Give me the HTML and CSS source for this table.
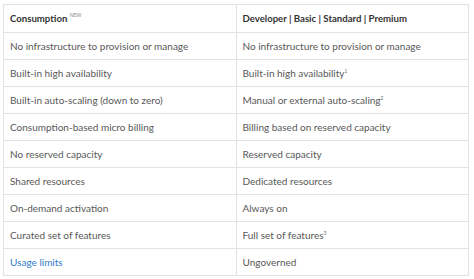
FILE: index.html
```html
<!DOCTYPE html>
<html>
<head>
<meta charset="utf-8">
<link rel="stylesheet" href="styles.css">
</head>
<body>
<table class="cmp">
  <thead>
    <tr><th>Consumption <sup class="new">NEW</sup></th><th>Developer | Basic | Standard | Premium</th></tr>
  </thead>
  <tbody>
    <tr><td>No infrastructure to provision or manage</td><td>No infrastructure to provision or manage</td></tr>
    <tr><td>Built-in high availability</td><td>Built-in high availability<sup class="fn">1</sup></td></tr>
    <tr><td>Built-in auto-scaling (down to zero)</td><td>Manual or external auto-scaling<sup class="fn">2</sup></td></tr>
    <tr><td>Consumption-based micro billing</td><td>Billing based on reserved capacity</td></tr>
    <tr><td>No reserved capacity</td><td>Reserved capacity</td></tr>
    <tr><td>Shared resources</td><td>Dedicated resources</td></tr>
    <tr><td>On-demand activation</td><td>Always on</td></tr>
    <tr><td>Curated set of features</td><td>Full set of features<sup class="fn">3</sup></td></tr>
    <tr><td><a class="link" href="#">Usage limits</a></td><td>Ungoverned</td></tr>
  </tbody>
</table>
</body>
</html>
```
FILE: styles.css
```css
html, body { margin: 0; padding: 0; background: #fff; }
body { padding: 4px 5px 0 3px; }
.cmp {
  width: 466px;
  border-collapse: collapse;
  table-layout: fixed;
  font-family: Lato, "Open Sans", sans-serif;
  font-size: 10px;
  color: #585858;
  border: 1px solid #cfcfcf;
}
.cmp th, .cmp td {
  text-align: left;
  padding: 0 0 0 6px;
  border: 1px solid #e3e3e3;
  white-space: nowrap;
}
.cmp th {
  height: 27px;
  font-weight: bold;
  font-size: 9.6px;
  color: #333;
}
.cmp td { height: 26px; }
.new {
  font-size: 5px;
  font-weight: normal;
  color: #888;
  vertical-align: 5px;
  line-height: 0;
}
.fn {
  font-size: 5px;
  color: #777;
  vertical-align: 4px;
  line-height: 0;
}
.link { color: #2f7ccc; text-decoration: none; }
```
